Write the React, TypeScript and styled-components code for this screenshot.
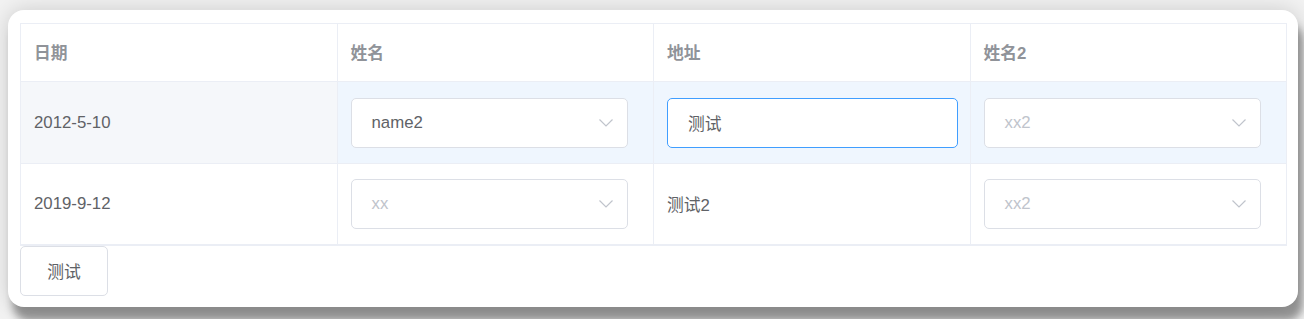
import React from "react";
import styled, { createGlobalStyle } from "styled-components";

const GlobalStyle = createGlobalStyle`
  html, body {
    margin: 0;
    padding: 0;
    background: #f2f2f2;
  }
  body {
    font-family: "Liberation Sans", "Noto Sans CJK SC", sans-serif;
    font-size: 16.8px;
    color: #606266;
  }
`;

const Page = styled.div`
  box-sizing: border-box;
  width: 1304px;
  height: 319px;
  padding: 10px 6px 12px 8px;
  overflow: hidden;
`;

const Card = styled.div`
  box-sizing: border-box;
  width: 1290px;
  height: 297px;
  padding: 13px 11px 11px 12px;
  background: #ffffff;
  border-radius: 16px;
  box-shadow: 5px 14px 8px rgba(0, 0, 0, 0.38), 0 0 22px rgba(0, 0, 0, 0.16);
`;

const Table = styled.table`
  width: 100%;
  table-layout: fixed;
  border-collapse: separate;
  border-spacing: 0;
  border-top: 1px solid #ebeef5;
  border-left: 1px solid #ebeef5;
  border-bottom: 1px solid #ebeef5;
`;

const Th = styled.th`
  box-sizing: border-box;
  height: 58px;
  padding: 0 12px 1px 13px;
  text-align: left;
  font-weight: 700;
  color: #909399;
  border-right: 1px solid #ebeef5;
  border-bottom: 1px solid #ebeef5;
`;

const Td = styled.td<{ $bg?: string; $h: number }>`
  box-sizing: border-box;
  height: ${(p) => p.$h}px;
  padding: 0 12px 0 13px;
  background: ${(p) => p.$bg ?? "#ffffff"};
  border-right: 1px solid #ebeef5;
  border-bottom: 1px solid #ebeef5;
  color: #606266;
  white-space: nowrap;
`;

const SelectBox = styled.div`
  box-sizing: border-box;
  width: 277px;
  height: 50px;
  display: flex;
  align-items: center;
  justify-content: space-between;
  padding: 0 14px 0 20px;
  background: #ffffff;
  border: 1px solid #dcdfe6;
  border-radius: 5px;
`;

const SelectText = styled.span<{ $placeholder?: boolean }>`
  color: ${(p) => (p.$placeholder ? "#c0c4cc" : "#606266")};
`;

const InputBox = styled.div`
  box-sizing: border-box;
  width: 100%;
  height: 50px;
  display: flex;
  align-items: center;
  padding: 0 20px;
  background: #ffffff;
  border: 1px solid #409eff;
  border-radius: 5px;
  color: #606266;
`;

const Button = styled.button`
  box-sizing: border-box;
  width: 88px;
  height: 50px;
  background: #ffffff;
  border: 1px solid #dcdfe6;
  border-radius: 5px;
  font-family: inherit;
  font-size: 16.8px;
  color: #606266;
`;

function Chevron() {
  return (
    <svg width="14" height="8" viewBox="0 0 14 8">
      <polyline points="0.5,0.5 7,7 13.5,0.5" fill="none" stroke="#c0c4cc" strokeWidth="1.2" />
    </svg>
  );
}

function Select({ value, placeholder }: { value?: string; placeholder?: string }) {
  return (
    <SelectBox>
      <SelectText $placeholder={!value}>{value ?? placeholder}</SelectText>
      <Chevron />
    </SelectBox>
  );
}

export default function App() {
  return (
    <>
      <GlobalStyle />
      <Page>
        <Card>
          <Table>
            <thead>
              <tr>
                <Th>日期</Th>
                <Th>姓名</Th>
                <Th>地址</Th>
                <Th>姓名2</Th>
              </tr>
            </thead>
            <tbody>
              <tr>
                <Td $h={82} $bg="#f5f7fa">2012-5-10</Td>
                <Td $h={82} $bg="#eff6fe">
                  <Select value="name2" />
                </Td>
                <Td $h={82} $bg="#eff6fe">
                  <InputBox>测试</InputBox>
                </Td>
                <Td $h={82} $bg="#eff6fe">
                  <Select placeholder="xx2" />
                </Td>
              </tr>
              <tr>
                <Td $h={81}>2019-9-12</Td>
                <Td $h={81}>
                  <Select placeholder="xx" />
                </Td>
                <Td $h={81}>测试2</Td>
                <Td $h={81}>
                  <Select placeholder="xx2" />
                </Td>
              </tr>
            </tbody>
          </Table>
          <Button>测试</Button>
        </Card>
      </Page>
    </>
  );
}
